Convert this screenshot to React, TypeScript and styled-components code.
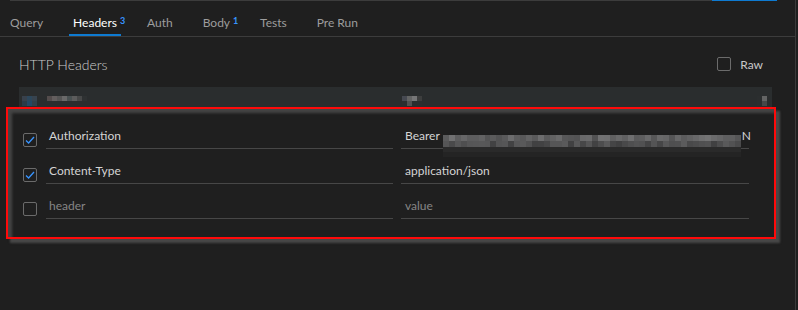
import React from "react";
import styled, { createGlobalStyle } from "styled-components";

const GlobalStyle = createGlobalStyle`
  html, body { margin: 0; padding: 0; background: #1f1f1f; }
  body { font-family: Lato, "Noto Sans", sans-serif; }
  * { box-sizing: border-box; }
`;

const Page = styled.div`
  width: 796px;
  height: 310px;
  border-right: 1px solid #3a3a3a;
  background: #1f1f1f;
  overflow: hidden;
`;

const TopStrip = styled.div`
  display: flex;
  height: 1px;
  padding: 0 18px 0 10px;
`;

const UrlLine = styled.div`
  flex: 1;
  background: #3c3c3c;
`;

const SendEdge = styled.div`
  width: 65px;
  background: #0e7ad1;
`;

const TabBar = styled.div`
  display: flex;
  gap: 22px;
  padding-left: 6px;
  height: 36px;
  border-bottom: 1px solid #3c3c3c;
`;

const Tab = styled.div<{ $active?: boolean }>`
  position: relative;
  display: flex;
  align-items: center;
  height: 35px;
  padding: 10px 4px 0;
  font-size: 12px;
  color: ${(p) => (p.$active ? "#ffffff" : "#9d9d9d")};
  border-bottom: 2px solid ${(p) => (p.$active ? "#0e7ad1" : "transparent")};
  white-space: nowrap;
`;

const Badge = styled.span`
  position: absolute;
  left: calc(100% - 1px);
  top: 15px;
  font-size: 9px;
  line-height: 1;
  font-weight: 700;
  color: #3794ff;
`;

const Panel = styled.div`
  padding: 0 23px 0 19px;
`;

const TitleRow = styled.div`
  display: flex;
  align-items: center;
  justify-content: space-between;
  height: 28px;
  margin-top: 13px;
`;

const Title = styled.div`
  font-size: 14px;
  font-weight: 300;
  color: #cccccc;
`;

const RawToggle = styled.label`
  display: flex;
  align-items: center;
  gap: 9px;
  margin-right: 9px;
  font-size: 12px;
  color: #c8c8c8;
`;

const Box = styled.span<{ $checked?: boolean }>`
  display: inline-flex;
  align-items: center;
  justify-content: center;
  width: 14px;
  height: 14px;
  border: 1px solid #6b6b6b;
  border-radius: 2px;
  background: #1f1f1f;
  flex: none;
`;

const HeaderStrip = styled.div`
  display: flex;
  align-items: flex-start;
  height: 20px;
  margin-top: 9px;
  padding-top: 9px;
  background: #2a2d2e;
`;

const Blob = styled.div<{ $offset: number; $cols: number; $cell: number }>`
  display: grid;
  grid-template-columns: repeat(${(p) => p.$cols}, ${(p) => p.$cell}px);
  grid-auto-rows: ${(p) => p.$cell}px;
  margin-left: ${(p) => p.$offset}px;
  opacity: 0.9;
`;

const Cell = styled.span``;

const Highlight = styled.div`
  margin: 0 -4px 0 -13px;
  border: 2px solid #ff0a0a;
  box-shadow: 4px 4px 2px #474747, inset 4px 4px 3px #454545;
  padding: 12px 26px 18px 15px;
  display: flex;
  flex-direction: column;
  gap: 7px;
`;

const Row = styled.div`
  display: grid;
  grid-template-columns: 14px 347px 347px;
  column-gap: 9px;
  align-items: start;
  height: 28px;
  & > :nth-child(3) { margin-left: -1px; }
`;

const CheckCell = styled.div`
  padding-top: 9px;
`;

const Field = styled.div<{ $placeholder?: boolean; $indent: number }>`
  position: relative;
  height: 28px;
  padding: 3px 0 0 ${(p) => p.$indent}px;
  line-height: 24px;
  font-size: 12px;
  color: ${(p) => (p.$placeholder ? "#868686" : "#d4d4d4")};
  border-bottom: 1px solid #474747;
  white-space: nowrap;
  overflow: visible;
`;

const Masked = styled.span`
  position: relative;
  display: inline-grid;
  grid-template-columns: repeat(50, 1fr);
  grid-auto-rows: 6px;
  width: 298px;
  height: 12px;
  vertical-align: -1px;
  margin: 0 1px 0 3px;
  &::after {
    content: "";
    position: absolute;
    left: 0;
    right: 0;
    top: 12px;
    height: 10px;
    background: linear-gradient(#2a2a2a 0 5px, #242424 5px 100%);
  }
`;

const Check = () => (
  <svg width="12" height="12" viewBox="0 0 12 12">
    <polyline points="2,6.5 4.6,9 10,3" fill="none" stroke="#3794ff" strokeWidth="1.3" />
  </svg>
);

function grays(count: number, seed: number, lo: number, span: number): string[] {
  let s = seed;
  const out: string[] = [];
  for (let i = 0; i < count; i++) {
    s = (s * 16807) % 2147483647;
    const v = lo + (s % span);
    out.push(`rgb(${v},${v},${v + 1})`);
  }
  return out;
}

const tokenCells = [...grays(50, 7, 0x52, 0x22), ...grays(50, 91, 0x40, 0x1c)];

const blobs: { offset: number; cols: number; cell: number; colors: string[] }[] = [
  { offset: 3, cols: 3, cell: 5, colors: ["#3a4450", "#2e4a60", "#394652", "#2c3d4a", "#254b6a", "#33414c"] },
  { offset: 10, cols: 8, cell: 5, colors: ["#585050", "#6a6464", "#5a5a5a", "#707070", "#4d5657", "#626262", "#4b4b4b", "#2f3233"] },
  { offset: 315, cols: 4, cell: 5, colors: ["#4a4d55", "#6a6a6a", "#7f7f7f", "#404040", "#2c2f30", "#555555", "#2c2f30", "#2c2f30"] },
  { offset: 335, cols: 2, cell: 5, colors: ["#2c2f30", "#6a6a6a", "#2c2f30", "#4a4a4a"] },
];

const tabs = [
  { label: "Query" },
  { label: "Headers", badge: "3", active: true },
  { label: "Auth" },
  { label: "Body", badge: "1" },
  { label: "Tests" },
  { label: "Pre Run" },
];

type HeaderRow = { checked: boolean; key: string; value: string; masked?: boolean };

const rows: HeaderRow[] = [
  { checked: true, key: "Authorization", value: "Bearer", masked: true },
  { checked: true, key: "Content-Type", value: "application/json" },
  { checked: false, key: "", value: "" },
];

export default function App() {
  return (
    <>
      <GlobalStyle />
      <Page>
        <TopStrip>
          <UrlLine />
          <SendEdge />
        </TopStrip>
        <TabBar>
          {tabs.map((t) => (
            <Tab key={t.label} $active={t.active}>
              {t.label}
              {t.badge && <Badge>{t.badge}</Badge>}
            </Tab>
          ))}
        </TabBar>
        <Panel>
          <TitleRow>
            <Title>HTTP Headers</Title>
            <RawToggle>
              <Box />
              Raw
            </RawToggle>
          </TitleRow>
          <HeaderStrip>
            {blobs.map((b, i) => (
              <Blob key={i} $offset={b.offset} $cols={b.cols} $cell={b.cell}>
                {b.colors.map((c, j) => (
                  <Cell key={j} style={{ background: c }} />
                ))}
              </Blob>
            ))}
          </HeaderStrip>
          <Highlight>
            {rows.map((r, i) => (
              <Row key={i}>
                <CheckCell>
                  <Box $checked={r.checked}>{r.checked && <Check />}</Box>
                </CheckCell>
                <Field $indent={3} $placeholder={!r.key}>
                  {r.key || "header"}
                </Field>
                <Field $indent={4} $placeholder={!r.value}>
                  {r.value || "value"}
                  {r.masked && (
                    <>
                      <Masked>
                        {tokenCells.map((c, j) => (
                          <Cell key={j} style={{ background: c }} />
                        ))}
                      </Masked>
                      N
                    </>
                  )}
                </Field>
              </Row>
            ))}
          </Highlight>
        </Panel>
      </Page>
    </>
  );
}
